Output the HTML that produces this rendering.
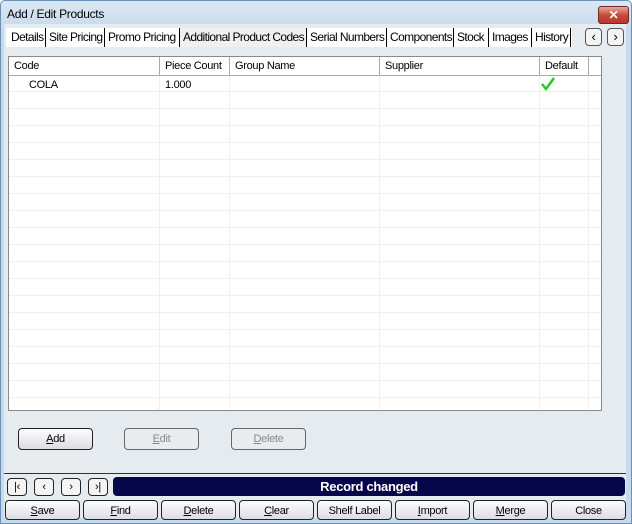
<!DOCTYPE html><html><head><style>
body{margin:0;width:632px;height:524px;overflow:hidden;font-family:"Liberation Sans",sans-serif;font-size:11px;letter-spacing:-0.3px}
.win{position:absolute;left:0;top:0;width:630px;height:522px;border:1px solid #6b8fb5;background:linear-gradient(#dbe7f4,#c7d9ec 30px,#c7d9ec);border-radius:5px 5px 0 0}
.title{position:absolute;left:6px;top:6px;font-size:12px;color:#000}
.x{position:absolute;left:597px;top:5px;width:29px;height:16px;background:linear-gradient(#e5a89a,#c5463a 55%,#b83a2c);border:1px solid #6e2a20;border-radius:3px;color:#fff;font-weight:bold;text-align:center;font-size:12px;line-height:16px}
.client{position:absolute;left:4px;top:24px;width:622px;height:494px;background:#e6ebf0}
.tab{position:absolute;top:28px;height:19px;line-height:19px;font-size:12px;letter-spacing:-0.6px;background:#fff;border-right:1px solid #000;box-sizing:border-box;padding-left:3px;white-space:nowrap;overflow:hidden}
.arr{position:absolute;top:28px;width:15px;height:16px;border:1px solid #555;border-radius:4px;background:#f4f4f4;text-align:center;line-height:15px;font-size:13px}
.grid{position:absolute;left:8px;top:56px;width:594px;height:355px;background:#fff;border:1px solid #8a8a8a;box-sizing:border-box;overflow:hidden;
background-image:repeating-linear-gradient(#fff 0 16px,#f0f0f0 16px 17px);background-position:0 18px}
.hdr{position:absolute;left:0;top:0;width:594px;height:18px;background:#fff;border-bottom:1px solid #aaa}
.hc{position:absolute;top:0;height:18px;line-height:18px;border-right:1px solid #aaa;padding-left:5px;box-sizing:border-box;font-size:11px}
.vl{position:absolute;top:18px;bottom:0;width:1px;background:#f0f0f0}
.btn{position:absolute;height:20px;border:1px solid #222;border-radius:4px;background:linear-gradient(#fdfdfd,#dcdce4);text-align:center;line-height:20px;box-sizing:border-box}
.dis{color:#888;border-color:#666;background:#e9ecef}
.nav{position:absolute;top:478px;width:20px;height:18px;border:1px solid #222;border-radius:4px;background:#f4f4f4;text-align:center;line-height:17px;box-sizing:border-box}
.status{position:absolute;left:113px;top:477px;width:512px;height:19px;background:#06064a;border-radius:4px;color:#fff;font-weight:bold;text-align:center;line-height:19px;font-size:13px}
</style></head><body>
<div class="win">
<div class="title">Add / Edit Products</div>
<div class="x">✕</div>
</div>
<div class="client"></div>
<div style="position:absolute;left:6px;top:28px;width:566px;height:19px;background:#fff"></div>
<div class="tab" style="left:8px;width:38px">Details</div>
<div class="tab" style="left:46px;width:59px">Site Pricing</div>
<div class="tab" style="left:105px;width:75px">Promo Pricing</div>
<div class="tab" style="left:180px;width:127px;background:#f0f0f0">Additional Product Codes</div>
<div class="tab" style="left:307px;width:80px">Serial Numbers</div>
<div class="tab" style="left:387px;width:67px">Components</div>
<div class="tab" style="left:454px;width:35px">Stock</div>
<div class="tab" style="left:489px;width:43px">Images</div>
<div class="tab" style="left:532px;width:39px">History</div>
<div class="arr" style="left:585px">‹</div>
<div class="arr" style="left:607px">›</div>
<div class="grid">
<div class="vl" style="left:150px"></div><div class="vl" style="left:220px"></div><div class="vl" style="left:370px"></div><div class="vl" style="left:530px"></div><div class="vl" style="left:579px"></div>
<div class="hdr">
<div class="hc" style="left:0;width:151px">Code</div>
<div class="hc" style="left:151px;width:70px">Piece Count</div>
<div class="hc" style="left:221px;width:150px">Group Name</div>
<div class="hc" style="left:371px;width:160px">Supplier</div>
<div class="hc" style="left:531px;width:49px">Default</div>
</div>
<div style="position:absolute;left:20px;top:22px">COLA</div>
<div style="position:absolute;left:156px;top:22px">1.000</div>
<svg style="position:absolute;left:531px;top:19px" width="16" height="16"><path d="M2 8 L6 13 L14 2" stroke="#22cc22" stroke-width="2.5" fill="none"/></svg>
</div>
<div class="btn" style="left:18px;top:428px;width:75px;height:22px;line-height:21px"><u>A</u>dd</div>
<div class="btn dis" style="left:124px;top:428px;width:75px;height:22px;line-height:21px"><u>E</u>dit</div>
<div class="btn dis" style="left:231px;top:428px;width:75px;height:22px;line-height:21px"><u>D</u>elete</div>
<div style="position:absolute;left:4px;top:473px;width:622px;height:1px;background:#333"></div>
<div class="nav" style="left:7px">|‹</div><div class="nav" style="left:34px">‹</div><div class="nav" style="left:61px">›</div><div class="nav" style="left:88px">›|</div>
<div class="status">Record changed</div>
<div class="btn" style="left:5px;top:500px;width:75px"><u>S</u>ave</div>
<div class="btn" style="left:83px;top:500px;width:75px"><u>F</u>ind</div>
<div class="btn" style="left:161px;top:500px;width:75px"><u>D</u>elete</div>
<div class="btn" style="left:239px;top:500px;width:75px"><u>C</u>lear</div>
<div class="btn" style="left:317px;top:500px;width:75px">Shelf Label</div>
<div class="btn" style="left:395px;top:500px;width:75px"><u>I</u>mport</div>
<div class="btn" style="left:473px;top:500px;width:75px"><u>M</u>erge</div>
<div class="btn" style="left:551px;top:500px;width:75px">Close</div>
</body></html>
